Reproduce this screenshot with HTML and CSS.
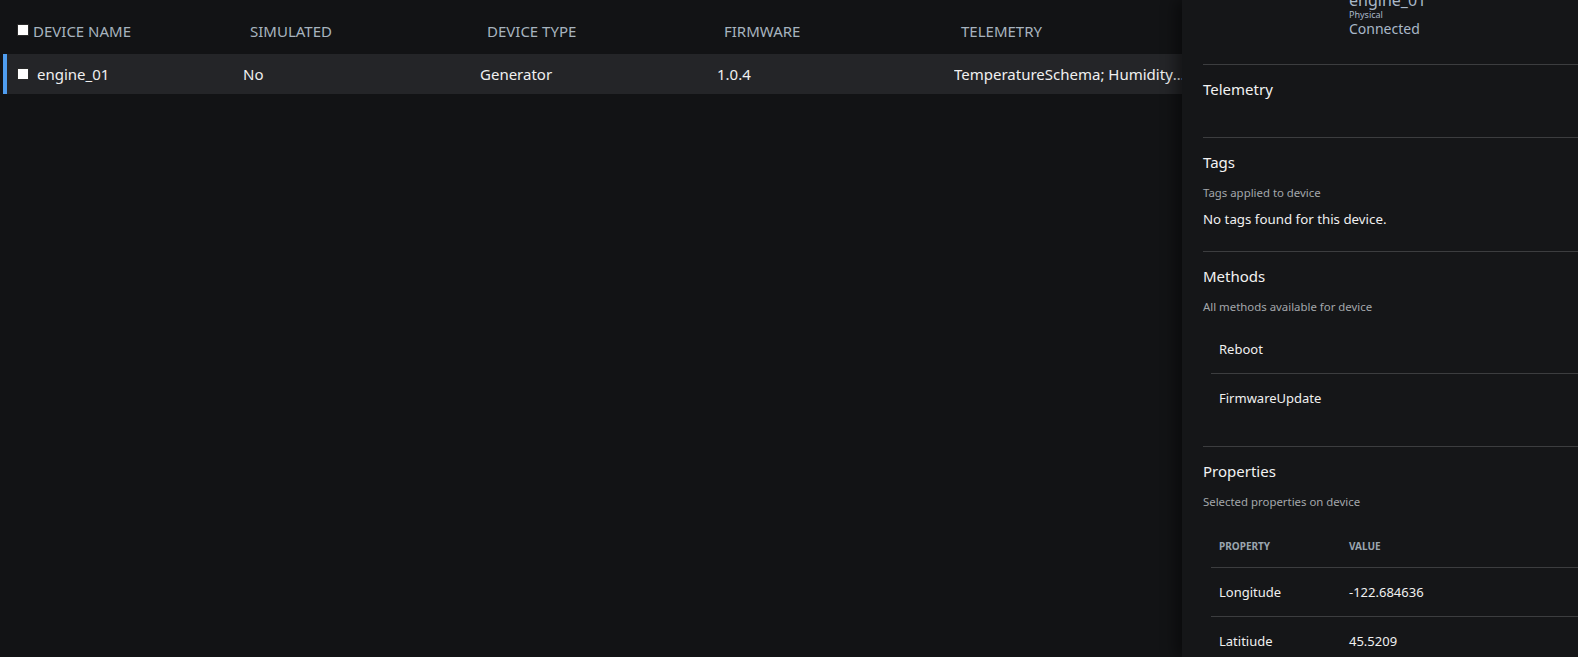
FILE: index.html
```html
<!DOCTYPE html>
<html lang="en">
<head>
<meta charset="UTF-8">
<meta name="viewport" content="width=device-width, initial-scale=1.0">
<title>Devices</title>
<link rel="stylesheet" href="styles.css">
</head>
<body>
<div class="devices">
    <div class="grid-header">
        <div class="cell first"><span class="check"></span>DEVICE NAME</div>
        <div class="cell">SIMULATED</div>
        <div class="cell">DEVICE TYPE</div>
        <div class="cell">FIRMWARE</div>
        <div class="cell">TELEMETRY</div>
    </div>
    <div class="grid-row selected">
        <div class="cell first"><span class="check"></span>engine_01</div>
        <div class="cell">No</div>
        <div class="cell">Generator</div>
        <div class="cell">1.0.4</div>
        <div class="cell telemetry-cell">TemperatureSchema; HumiditySchema</div>
    </div>
</div>

<div class="flyout">
    <div class="device-summary">
        <div class="device-name">engine_01</div>
        <div class="device-kind">Physical</div>
        <div class="device-status">Connected</div>
    </div>

    <div class="section telemetry">
        <div class="section-title">Telemetry</div>
    </div>

    <div class="section tags">
        <div class="section-title">Tags</div>
        <div class="section-note">Tags applied to device</div>
        <div class="empty-note">No tags found for this device.</div>
    </div>

    <div class="section methods">
        <div class="section-title">Methods</div>
        <div class="section-note">All methods available for device</div>
        <div class="method-list">
            <div class="method">Reboot</div>
            <div class="method">FirmwareUpdate</div>
        </div>
    </div>

    <div class="section properties">
        <div class="section-title">Properties</div>
        <div class="section-note">Selected properties on device</div>
        <div class="prop-table">
            <div class="prop-row prop-head">
                <div>PROPERTY</div>
                <div>VALUE</div>
            </div>
            <div class="prop-row">
                <div>Longitude</div>
                <div>-122.684636</div>
            </div>
            <div class="prop-row">
                <div>Latitiude</div>
                <div>45.5209</div>
            </div>
        </div>
    </div>
</div>
</body>
</html>
```

FILE: styles.css
```css
html, body {
    margin: 0;
    height: 100%;
    overflow: hidden;
    background-color: #121315;
    font-family: "Noto Sans", "Open Sans", sans-serif;
    color: #f0f0f0;
}

/* device grid */
.devices {
    padding-left: 3px;
}

.grid-header, .grid-row {
    display: grid;
    grid-template-columns: 236px 237px 237px 237px 237px;
    border-left: 4px solid transparent;
    font-size: 15px;
}

.grid-header {
    height: 54px;
    box-sizing: border-box;
    padding-top: 7px;
    align-items: center;
    color: #a7b3bf;
}

.grid-header .cell {
    padding-left: 7px;
}

.grid-row {
    height: 40px;
    align-items: center;
    background-color: #242528;
}

.grid-row.selected {
    border-left-color: #4f9df0;
}

.cell {
    white-space: nowrap;
    overflow: hidden;
    text-overflow: ellipsis;
}

.grid-header .cell.first, .grid-row .cell.first {
    display: flex;
    align-items: center;
    padding-left: 10px;
}

.telemetry-cell {
    padding-right: 6px;
}

.check {
    width: 10px;
    height: 10px;
    background-color: #fff;
    border: 1px solid #2a2a2a;
}

.grid-header .check {
    margin-right: 4px;
    margin-top: -2px;
}

.grid-row .check {
    margin-right: 8px;
}

/* details flyout */
.flyout {
    position: absolute;
    top: 0;
    right: 0;
    bottom: 0;
    width: 396px;
    box-sizing: border-box;
    padding-left: 21px;
    background-color: #151618;
    box-shadow: -6px 0 14px rgba(0,0,0,0.45);
    overflow: hidden;
}

.device-summary {
    display: flex;
    flex-direction: column;
    height: 64px;
    padding-left: 146px;
    border-bottom: 1px solid #3c3d3f;
    color: #a9b8c8;
}

.device-name {
    margin-top: -9px;
    font-size: 16px;
    line-height: 18px;
}

.device-kind {
    font-size: 9px;
    line-height: 12px;
}

.device-status {
    font-size: 14px;
    line-height: 16px;
}

.section {
    padding-top: 13px;
    border-bottom: 1px solid #3c3d3f;
}

.section-title {
    font-size: 15px;
    line-height: 22px;
    color: #f2f2f2;
}

.section-note {
    margin-top: 12px;
    font-size: 11.4px;
    line-height: 16px;
    color: #a3a7ab;
}

.telemetry {
    padding-bottom: 37px;
}

.tags {
    padding-bottom: 22px;
}

.empty-note {
    margin-top: 8px;
    font-size: 13.3px;
    line-height: 20px;
}

.methods {
    padding-bottom: 24px;
}

.method-list {
    margin-top: 10px;
    margin-left: 8px;
}

.method {
    height: 48px;
    display: flex;
    align-items: center;
    padding-left: 8px;
    font-size: 13px;
    border-bottom: 1px solid #3c3d3f;
}

.method:last-child {
    border-bottom: none;
}

.properties {
    border-bottom: none;
}

.prop-table {
    margin-top: 14px;
    margin-left: 8px;
}

.prop-row {
    display: grid;
    grid-template-columns: 130px 1fr;
    height: 48px;
    align-items: center;
    font-size: 13px;
    border-bottom: 1px solid #3c3d3f;
}

.prop-row div {
    padding-left: 8px;
}

.prop-head {
    height: 43px;
    font-size: 10px;
    font-weight: bold;
    color: #9ba5af;
}
```
